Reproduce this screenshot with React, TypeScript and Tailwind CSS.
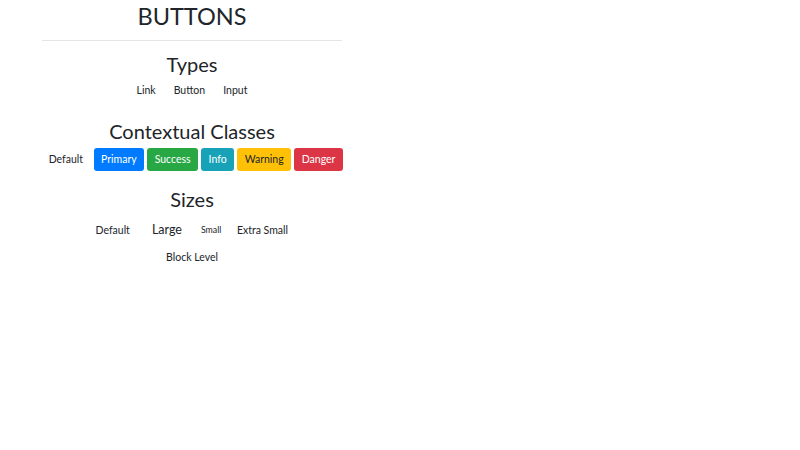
import React from "react";

const base = "inline-block rounded-[3px] px-[7.5px] leading-[23px] h-[23px] text-[10.5px]";

export default function App() {
  return (
    <div className="w-[800px] h-[450px] bg-white text-[#212529]" style={{ fontFamily: 'Lato, sans-serif' }}>
      <div className="ml-[42px] w-[300px] flex flex-col items-center">
        <h1 className="text-[23.5px] leading-[32px] mt-[0px] h-[32px]">BUTTONS</h1>
        <div className="w-full border-t border-[#e5e5e5] mt-[8px]" />
        <h2 className="text-[20px] leading-[28px] mt-[9px]">Types</h2>
        <div className="flex gap-[3px] mt-[1px]">
          <span className={base}>Link</span>
          <span className={base}>Button</span>
          <span className={base}>Input</span>
        </div>
        <h2 className="text-[20px] leading-[28px] mt-[15px]">Contextual Classes</h2>
        <div className="flex gap-[3px] mt-[3px]">
          <span className={base}>Default</span>
          <span className={`${base} bg-[#007bff] text-white`}>Primary</span>
          <span className={`${base} bg-[#28a745] text-white`}>Success</span>
          <span className={`${base} bg-[#17a2b8] text-white`}>Info</span>
          <span className={`${base} bg-[#ffc107] text-[#212529]`}>Warning</span>
          <span className={`${base} bg-[#dc3545] text-white`}>Danger</span>
        </div>
        <h2 className="text-[20px] leading-[28px] mt-[14px]">Sizes</h2>
        <div className="flex items-center gap-[3px] mt-[2px]">
          <span className={base}>Default</span>
          <span className="inline-block px-[11.5px] h-[30px] leading-[30px] text-[12.5px]">Large</span>
          <span className="inline-block px-[4.5px] h-[20px] leading-[20px] text-[8.8px]">Small</span>
          <span className="inline-block px-[8px] h-[23px] leading-[23px] text-[10.5px]">Extra Small</span>
        </div>
        <div className="-mt-[2px]">
          <span className={base}>Block Level</span>
        </div>
      </div>
    </div>
  );
}
